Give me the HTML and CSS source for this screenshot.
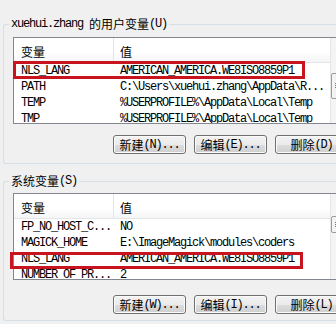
FILE: index.html
```html
<!DOCTYPE html>
<html lang="zh-CN">
<head>
  <meta charset="UTF-8">
  <title>环境变量</title>
  <link rel="stylesheet" href="styles.css">
</head>
<body>

<fieldset class="group group-user">
  <legend><span class="m">xuehui.zhang </span>的用户变量<span class="m">(U)</span></legend>
  <div class="listview">
    <div class="lv-main">
      <div class="lv-head">
        <div class="col col-name">变量</div>
        <div class="col col-value">值</div>
      </div>
      <div class="row"><div class="col col-name m">NLS_LANG</div><div class="col col-value m">AMERICAN_AMERICA.WE8ISO8859P1</div></div>
      <div class="row"><div class="col col-name m">PATH</div><div class="col col-value m">C:\Users\xuehui.zhang\AppData\R...</div></div>
      <div class="row"><div class="col col-name m">TEMP</div><div class="col col-value m">%USERPROFILE%\AppData\Local\Temp</div></div>
      <div class="row"><div class="col col-name m">TMP</div><div class="col col-value m">%USERPROFILE%\AppData\Local\Temp</div></div>
    </div>
    <div class="scrollbar">
      <div class="sb-arrow"></div>
      <div class="sb-thumb thumb-user"></div>
    </div>
  </div>
  <div class="buttons">
    <button class="btn">新建<span class="m">(N)...</span></button>
    <button class="btn">编辑<span class="m">(E)...</span></button>
    <button class="btn">删除<span class="m">(D)</span></button>
  </div>
</fieldset>

<fieldset class="group group-system">
  <legend>系统变量<span class="m">(S)</span></legend>
  <div class="listview">
    <div class="lv-main">
      <div class="lv-head">
        <div class="col col-name">变量</div>
        <div class="col col-value">值</div>
      </div>
      <div class="row"><div class="col col-name m">FP_NO_HOST_C...</div><div class="col col-value m">NO</div></div>
      <div class="row"><div class="col col-name m">MAGICK_HOME</div><div class="col col-value m">E:\ImageMagick\modules\coders</div></div>
      <div class="row"><div class="col col-name m">NLS_LANG</div><div class="col col-value m">AMERICAN_AMERICA.WE8ISO8859P1</div></div>
      <div class="row"><div class="col col-name m">NUMBER_OF_PR...</div><div class="col col-value m">2</div></div>
    </div>
    <div class="scrollbar">
      <div class="sb-arrow"></div>
      <div class="sb-thumb thumb-system"></div>
    </div>
  </div>
  <div class="buttons">
    <button class="btn">新建<span class="m">(W)...</span></button>
    <button class="btn">编辑<span class="m">(I)...</span></button>
    <button class="btn">删除<span class="m">(L)</span></button>
  </div>
</fieldset>

<!-- red marker frames over the list rows -->
<div class="mark mark-user"></div>
<div class="mark mark-system"></div>

</body>
</html>
```

FILE: styles.css
```css
html {
  overflow: hidden;
}

body {
  margin: 0;
  width: 336px;
  height: 324px;
  overflow: hidden;
  position: relative;
  background-color: #f0f0f0;
  color: #000;
  font-family: "Noto Sans CJK SC", "Liberation Sans", sans-serif;
  font-size: 12px;
}

.m {
  font-family: "Liberation Mono", "Noto Sans CJK SC", monospace;
  font-size: 12px;
  letter-spacing: -1.2px;
}

.group {
  box-sizing: border-box;
  width: 333px;
  min-width: 0;
  margin: 17px 0 0 3px;
  padding: 0 9px 9px 9px;
  border: 1px solid #d5dfe5;
  border-right: none;
  border-radius: 3px 0 0 3px;
  overflow: visible;
}

.group-system {
  margin-top: 10px;
  padding-bottom: 6px;
}

legend {
  margin-left: -4px;
  padding: 0 2px;
  height: 14px;
  line-height: 14px;
  white-space: pre;
}

legend span {
  vertical-align: top;
  line-height: 14px;
}

.listview {
  display: flex;
  width: 335px;
  height: 87px;
  margin-top: 6px;
  box-sizing: border-box;
  border: 1px solid #828790;
  background-color: #fff;
  overflow: hidden;
}

.group-system .listview {
  margin-top: 5px;
}

.lv-main {
  flex: 1;
  min-width: 0;
}

.lv-head {
  display: flex;
  height: 25px;
  box-sizing: border-box;
  border-bottom: 1px solid #e5e5e5;
  background: linear-gradient(#ffffff 0%, #ffffff 60%, #f4f5f7 100%);
}

.lv-head .col {
  display: flex;
  align-items: center;
  padding-top: 3px;
  line-height: 14px;
}

.lv-head .col-name {
  border-right: 1px solid #e5e5e5;
}

.col {
  box-sizing: border-box;
  white-space: pre;
  overflow: hidden;
}

.col-name {
  width: 100px;
  padding-left: 7px;
}

.col-value {
  flex: 1;
  padding-left: 6px;
}

.row {
  display: flex;
  height: 16px;
  line-height: 16px;
}

.scrollbar {
  width: 17px;
  box-sizing: border-box;
  border-left: 1px solid #e6e6e6;
  background-color: #f4f4f4;
  display: flex;
  flex-direction: column;
}

.sb-arrow {
  height: 17px;
}

.sb-thumb {
  position: relative;
  margin: 0 1px 0 0;
  border: 1px solid #9a9a9a;
  border-radius: 2px;
  background: linear-gradient(to right, #f6f6f6, #e2e2e2);
}

.sb-thumb::after {
  content: "";
  position: absolute;
  left: 3px;
  top: 50%;
  width: 7px;
  height: 1px;
  margin-top: -3px;
  background-color: #7a7a7a;
  box-shadow: 0 2px 0 #7a7a7a, 0 4px 0 #7a7a7a;
}

.thumb-user {
  margin-top: 18px;
  height: 24px;
}

.thumb-system {
  margin-top: 5px;
  height: 15px;
}

.buttons {
  display: flex;
  gap: 8px;
  margin-top: 11px;
  padding-left: 100px;
}

.group-system .buttons {
  margin-top: 15px;
}

.btn {
  flex: none;
  width: 73px;
  height: 19px;
  padding: 0;
  display: flex;
  align-items: center;
  justify-content: center;
  border: 1px solid #707070;
  border-radius: 3px;
  box-shadow: inset 0 0 0 1px #fbfbfb;
  background: linear-gradient(#f2f2f2 0%, #ebebeb 50%, #dddddd 51%, #cfcfcf 100%);
  color: #000;
  font-family: "Noto Sans CJK SC", sans-serif;
  font-size: 12px;
  line-height: 14px;
  white-space: pre;
}

.mark {
  position: absolute;
  box-sizing: border-box;
  border: 3px solid #c8141e;
}

.mark-user {
  left: 13px;
  top: 61px;
  width: 292px;
  height: 18px;
}

.mark-system {
  left: 10px;
  top: 252px;
  width: 293px;
  height: 17px;
}
```
